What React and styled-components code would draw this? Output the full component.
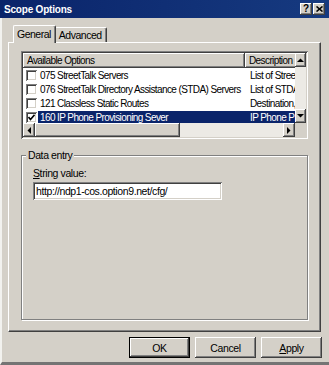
import React from "react";
import styled, { createGlobalStyle } from "styled-components";

const GlobalStyle = createGlobalStyle`
  html, body {
    margin: 0;
    padding: 0;
    background: #d4d0c8;
  }
  body {
    font-family: "Liberation Sans", Arial, sans-serif;
    font-size: 10px;
    letter-spacing: -0.6px;
    color: #000;
  }
`;

const raised = `
  box-shadow: inset -1px -1px #404040, inset 1px 1px #ffffff,
    inset -2px -2px #808080, inset 2px 2px #d4d0c8;
`;

const sunken = `
  box-shadow: inset 1px 1px #808080, inset -1px -1px #ffffff,
    inset 2px 2px #404040, inset -2px -2px #d4d0c8;
`;

const Window = styled.div`
  width: 329px;
  height: 365px;
  display: flex;
  flex-direction: column;
  background: #d4d0c8;
  overflow: hidden;
`;

const TitleBar = styled.div`
  height: 18px;
  flex: none;
  display: flex;
  align-items: center;
  padding: 0 4px;
  background: linear-gradient(90deg, #0a246a, #163a80);
  color: #fff;
  font-weight: bold;
  font-size: 10px;
  letter-spacing: -0.2px;
`;

const Title = styled.span`
  flex: 1;
`;

const CaptionButtons = styled.div`
  display: flex;
  gap: 1px;
`;

const CaptionButton = styled.div`
  width: 12px;
  height: 12px;
  background: #d4d0c8;
  ${raised}
  display: flex;
  align-items: center;
  justify-content: center;
  color: #000;
  font-weight: bold;
  font-size: 10px;
  line-height: 1;
`;

const Frame = styled.div`
  flex: 1;
  display: flex;
  flex-direction: column;
  border-left: 2px solid #f2f2ef;
  border-bottom: 3px solid #747474;
  padding: 7px 8px 0 6px;
`;

const TabStrip = styled.div`
  display: flex;
  align-items: flex-end;
  height: 18px;
  padding-left: 5px;
  margin-bottom: -1px;
`;

const Tab = styled.div`
  position: relative;
  z-index: ${(p) => (p.$active ? 2 : 1)};
  height: ${(p) => (p.$active ? "18px" : "15px")};
  margin-bottom: ${(p) => (p.$active ? "0" : "1px")};
  margin-left: ${(p) => (p.$active ? "0" : "-1px")};
  box-sizing: border-box;
  padding: ${(p) => (p.$active ? "2px 4px 0 3px" : "1px 4px 0 4px")};
  background: #d4d0c8;
  border-top: 1px solid #fff;
  border-left: ${(p) => (p.$active ? "1px solid #fff" : "none")};
  border-right: 1px solid #404040;
  border-radius: 2px 2px 0 0;
  box-shadow: inset -1px 0 #808080;
  font-size: 10.5px;
  letter-spacing: -0.5px;
`;

const Panel = styled.div`
  height: 290px;
  box-sizing: border-box;
  background: #d4d0c8;
  border-top: 1px solid #fff;
  border-left: 1px solid #fff;
  border-right: 1px solid #404040;
  border-bottom: 1px solid #404040;
  box-shadow: inset -1px -1px #808080;
  padding: 8px 12px 0 12px;
  display: flex;
  flex-direction: column;
`;

const ListView = styled.div`
  width: 287px;
  height: 88px;
  box-sizing: border-box;
  padding: 2px;
  background: #fff;
  ${sunken}
  display: grid;
  grid-template-columns: 1fr 11px;
  grid-template-rows: 1fr 14px;
`;

const ListContent = styled.div`
  overflow: hidden;
  white-space: nowrap;
`;

const HeaderRow = styled.div`
  display: flex;
  height: 15px;
`;

const HeaderCell = styled.div`
  flex: none;
  width: ${(p) => p.$width}px;
  box-sizing: border-box;
  padding: 2px 0 0 4px;
  background: #d4d0c8;
  ${raised}
`;

const Row = styled.div`
  display: flex;
  align-items: center;
  height: 14px;
`;

const Check = styled.div`
  flex: none;
  width: 11px;
  height: 11px;
  margin: 0 1px 0 3px;
  box-sizing: border-box;
  background: #fff;
  ${sunken}
  display: flex;
  align-items: center;
  justify-content: center;
`;

const RowBody = styled.div`
  display: flex;
  height: 13px;
  align-items: center;
  background: ${(p) => (p.$selected ? "#0a246a" : "transparent")};
  color: ${(p) => (p.$selected ? "#fff" : "#000")};
`;

const Cell = styled.div`
  flex: none;
  width: ${(p) => p.$width}px;
  box-sizing: border-box;
  padding-left: ${(p) => p.$pad}px;
  overflow: hidden;
`;

const ScrollV = styled.div`
  display: flex;
  flex-direction: column;
  justify-content: space-between;
  background: #eceae5;
`;

const ScrollH = styled.div`
  display: flex;
  background: #eceae5;
`;

const ScrollBtn = styled.div`
  flex: none;
  width: ${(p) => p.$w || 11}px;
  height: ${(p) => p.$h || 14}px;
  box-sizing: border-box;
  background: #d4d0c8;
  ${raised}
  display: flex;
  align-items: center;
  justify-content: center;
`;

const Thumb = styled.div`
  flex: none;
  width: ${(p) => p.$w}px;
  background: #d4d0c8;
  ${raised}
`;

const Track = styled.div`
  flex: 1;
`;

const Corner = styled.div`
  background: #d4d0c8;
`;

const GroupBox = styled.fieldset`
  margin: 10px 0 0 0;
  height: 171px;
  box-sizing: border-box;
  min-width: 0;
  padding: 6px 11px 0 11px;
  border: 1px solid #808080;
  box-shadow: inset 1px 1px #fff, 1px 1px #fff;
`;

const Legend = styled.legend`
  margin-left: -7px;
  padding: 0 2px;
  background: #d4d0c8;
  font-size: 10.5px;
  letter-spacing: -0.4px;
`;

const FieldLabel = styled.div`
  font-size: 10.5px;
  letter-spacing: -0.4px;
  margin-bottom: 3px;
`;

const TextInput = styled.div`
  width: 189px;
  height: 18px;
  box-sizing: border-box;
  padding: 3px 0 0 3px;
  background: #fff;
  ${sunken}
  white-space: nowrap;
  overflow: hidden;
  font-size: 10.5px;
  letter-spacing: -0.4px;
`;

const ButtonRow = styled.div`
  display: flex;
  justify-content: flex-end;
  gap: 5px;
  margin-top: 5px;
  margin-right: -1px;
`;

const Button = styled.div`
  width: 61px;
  height: 21px;
  box-sizing: border-box;
  display: flex;
  align-items: center;
  justify-content: center;
  background: #d4d0c8;
  font-size: 10.5px;
  letter-spacing: -0.4px;
  ${(p) =>
    p.$default
      ? `box-shadow: inset 0 0 0 1px #000, inset -2px -2px #404040, inset 2px 2px #ffffff,
    inset -3px -3px #808080;`
      : raised}
`;

const Arrow = ({ dir }) => {
  const pts = {
    up: "0,4 7,4 3.5,0.5",
    down: "0,0 7,0 3.5,3.5",
    left: "4,0 4,7 0.5,3.5",
    right: "0,0 0,7 3.5,3.5",
  }[dir];
  const vertical = dir === "up" || dir === "down";
  return (
    <svg width={vertical ? 7 : 4} height={vertical ? 4 : 7} viewBox={vertical ? "0 0 7 4" : "0 0 4 7"}>
      <polygon points={pts} fill="#000" />
    </svg>
  );
};

const options = [
  { code: "075", name: "StreetTalk Servers", desc: "List of StreetTalk servers" },
  { code: "076", name: "StreetTalk Directory Assistance (STDA) Servers", desc: "List of STDA servers" },
  { code: "121", name: "Classless Static Routes", desc: "Destination, mask and router IP" },
  { code: "160", name: "IP Phone Provisioning Sever", desc: "IP Phone Provisioning Server", checked: true, selected: true },
];

export default function App() {
  return (
    <Window>
      <GlobalStyle />
      <TitleBar>
        <Title>Scope Options</Title>
        <CaptionButtons>
          <CaptionButton>?</CaptionButton>
          <CaptionButton>
            <svg width="7" height="6" viewBox="0 0 7 6">
              <path d="M0.5 0.5 L6.5 5.5 M6.5 0.5 L0.5 5.5" stroke="#000" strokeWidth="1.6" />
            </svg>
          </CaptionButton>
        </CaptionButtons>
      </TitleBar>
      <Frame>
        <TabStrip>
          <Tab $active>General</Tab>
          <Tab>Advanced</Tab>
        </TabStrip>
        <Panel>
          <ListView>
            <ListContent>
              <HeaderRow>
                <HeaderCell $width={222}>Available Options</HeaderCell>
                <HeaderCell $width={120}>Description</HeaderCell>
              </HeaderRow>
              {options.map((o) => (
                <Row key={o.code}>
                  <Check>
                    {o.checked && (
                      <svg width="7" height="7" viewBox="0 0 7 7">
                        <path d="M0.5 3 L2.5 5.5 L6.5 0.8" stroke="#000" strokeWidth="1.6" fill="none" />
                      </svg>
                    )}
                  </Check>
                  <RowBody $selected={o.selected}>
                    <Cell $width={207} $pad={2}>
                      {o.code} {o.name}
                    </Cell>
                    <Cell $width={120} $pad={5}>
                      {o.desc}
                    </Cell>
                  </RowBody>
                </Row>
              ))}
            </ListContent>
            <ScrollV>
              <ScrollBtn>
                <Arrow dir="up" />
              </ScrollBtn>
              <ScrollBtn>
                <Arrow dir="down" />
              </ScrollBtn>
            </ScrollV>
            <ScrollH>
              <ScrollBtn $w={12}>
                <Arrow dir="left" />
              </ScrollBtn>
              <Thumb $w={145} />
              <Track />
              <ScrollBtn $w={12}>
                <Arrow dir="right" />
              </ScrollBtn>
            </ScrollH>
            <Corner />
          </ListView>
          <GroupBox>
            <Legend>Data entry</Legend>
            <FieldLabel>
              <u>S</u>tring value:
            </FieldLabel>
            <TextInput>http://ndp1-cos.option9.net/cfg/</TextInput>
          </GroupBox>
        </Panel>
        <ButtonRow>
          <Button $default>OK</Button>
          <Button>Cancel</Button>
          <Button>
            <u>A</u>pply
          </Button>
        </ButtonRow>
      </Frame>
    </Window>
  );
}
